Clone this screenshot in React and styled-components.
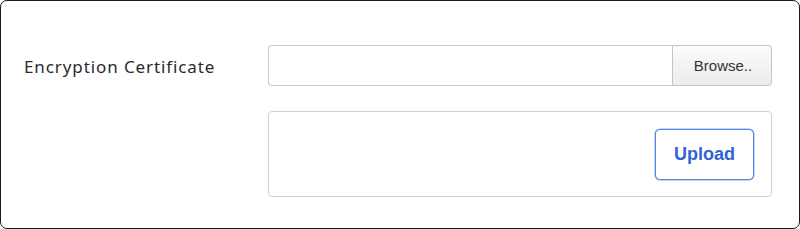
import React from 'react';
import styled, { createGlobalStyle } from 'styled-components';

const Global = createGlobalStyle`
  html, body {
    margin: 0;
    padding: 0;
    background: #ffffff;
  }
  * {
    box-sizing: border-box;
  }
`;

const Frame = styled.div`
  width: 800px;
  height: 229px;
  border: 1.5px solid #1a1a1a;
  border-radius: 7px;
  background: #ffffff;
  display: grid;
  grid-template-columns: 267px 504px;
  align-content: start;
  padding-top: 44px;
`;

const Label = styled.div`
  font-family: "Noto Sans", Inter, sans-serif;
  font-size: 17px;
  letter-spacing: 0.9px;
  color: #2b2b2b;
  padding-left: 23px;
  padding-top: 2px;
  height: 41px;
  display: flex;
  align-items: center;
`;

const Fields = styled.div`
  display: flex;
  flex-direction: column;
  gap: 25px;
`;

const FileRow = styled.div`
  display: flex;
  height: 41px;
`;

const FileInput = styled.div`
  flex: 1;
  border: 1px solid #c9c9c9;
  border-right: none;
  border-radius: 4px 0 0 4px;
  background: #fff;
`;

const BrowseButton = styled.button`
  width: 100px;
  height: 41px;
  border: 1px solid #c4c4c4;
  border-radius: 0 4px 4px 0;
  background: linear-gradient(#fbfbfb, #ececec);
  font-family: "Liberation Sans", Arial, sans-serif;
  font-size: 15px;
  color: #333;
  padding: 0;
  padding-left: 2px;
`;

const Card = styled.div`
  height: 86px;
  border: 1px solid #cfcfcf;
  border-radius: 4px;
  display: flex;
  justify-content: flex-end;
  align-items: flex-start;
  padding: 17px 17px 0 0;
`;

const UploadButton = styled.button`
  width: 99px;
  height: 51px;
  border: 1px solid #5287e6;
  box-shadow: 0 0 0 0.5px #84a9ee;
  border-radius: 5px;
  background: #fff;
  color: #2f63d3;
  font-family: "Liberation Sans", Arial, sans-serif;
  font-weight: bold;
  font-size: 18px;
  padding: 0;
`;

export default function App() {
  return (
    <>
      <Global />
      <Frame>
        <Label>Encryption Certificate</Label>
        <Fields>
          <FileRow>
            <FileInput />
            <BrowseButton>Browse..</BrowseButton>
          </FileRow>
          <Card>
            <UploadButton>Upload</UploadButton>
          </Card>
        </Fields>
      </Frame>
    </>
  );
}
